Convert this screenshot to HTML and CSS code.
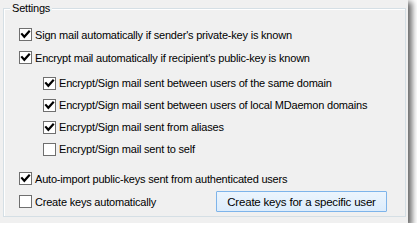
FILE: index.html
```html
<!DOCTYPE html>
<html>
<head>
<meta charset="utf-8">
<link rel="stylesheet" href="styles.css">
</head>
<body>
<div class="panel">
  <div class="group">
    <span class="legend">Settings</span>
    <div class="row"><span class="cb on"><svg viewBox="0 0 11 11" width="11" height="11"><path d="M2 5.2 L4.3 7.8 L9 2.6" /></svg></span><span class="lbl">Sign mail automatically if sender's private-key is known</span></div>
    <div class="row"><span class="cb on"><svg viewBox="0 0 11 11" width="11" height="11"><path d="M2 5.2 L4.3 7.8 L9 2.6" /></svg></span><span class="lbl">Encrypt mail automatically if recipient's public-key is known</span></div>
    <div class="sub">
      <div class="row"><span class="cb on"><svg viewBox="0 0 11 11" width="11" height="11"><path d="M2 5.2 L4.3 7.8 L9 2.6" /></svg></span><span class="lbl">Encrypt/Sign mail sent between users of the same domain</span></div>
      <div class="row"><span class="cb on"><svg viewBox="0 0 11 11" width="11" height="11"><path d="M2 5.2 L4.3 7.8 L9 2.6" /></svg></span><span class="lbl">Encrypt/Sign mail sent between users of local MDaemon domains</span></div>
      <div class="row"><span class="cb on"><svg viewBox="0 0 11 11" width="11" height="11"><path d="M2 5.2 L4.3 7.8 L9 2.6" /></svg></span><span class="lbl">Encrypt/Sign mail sent from aliases</span></div>
      <div class="row"><span class="cb"></span><span class="lbl">Encrypt/Sign mail sent to self</span></div>
    </div>
    <div class="row gap"><span class="cb on"><svg viewBox="0 0 11 11" width="11" height="11"><path d="M2 5.2 L4.3 7.8 L9 2.6" /></svg></span><span class="lbl">Auto-import public-keys sent from authenticated users</span></div>
    <div class="row">
      <span class="cb"></span><span class="lbl">Create keys automatically</span>
      <span class="btn">Create keys for a specific user</span>
    </div>
  </div>
</div>
</body>
</html>
```
FILE: styles.css
```css
html, body {
  margin: 0;
  padding: 0;
  background: #ffffff;
}
body {
  font-family: "Liberation Sans", Arial, sans-serif;
  font-size: 11px;
  letter-spacing: -0.2px;
  color: #000;
}
.panel {
  width: 408px;
  height: 223px;
  background: #f0f0f0;
  box-shadow: 3px 3px 6px 1px rgba(0, 0, 0, 0.6);
  padding: 8px 2px 0 3px;
  box-sizing: border-box;
}
.group {
  position: relative;
  height: 209px;
  border: 1px solid #d5dfe5;
  box-shadow: inset 1px 1px 0 #ffffff;
  padding: 14px 0 0 15px;
  box-sizing: border-box;
}
.legend {
  position: absolute;
  top: -7px;
  left: 6px;
  padding: 0 2px;
  background: #f0f0f0;
  line-height: 13px;
}
.row {
  display: flex;
  align-items: center;
  height: 23px;
}
.sub {
  margin-top: 3px;
  padding-left: 24px;
}
.sub .row {
  height: 22px;
}
.gap {
  margin-top: 7px;
}
.cb {
  width: 13px;
  height: 13px;
  box-sizing: border-box;
  border: 1px solid #6f6f6f;
  background: #ffffff;
  display: flex;
  align-items: center;
  justify-content: center;
  flex: none;
}
.cb svg path {
  fill: none;
  stroke: #000;
  stroke-width: 2.2;
  stroke-linecap: square;
}
.lbl {
  margin-left: 3px;
  white-space: nowrap;
}
.btn {
  margin-left: auto;
  margin-right: 18px;
  width: 171px;
  height: 21px;
  box-sizing: border-box;
  border: 1px solid #7eb4ea;
  border-radius: 1px;
  background: linear-gradient(#ecf5fd, #dcecfc);
  display: flex;
  align-items: center;
  justify-content: center;
  font-size: 11.5px;
}
```
